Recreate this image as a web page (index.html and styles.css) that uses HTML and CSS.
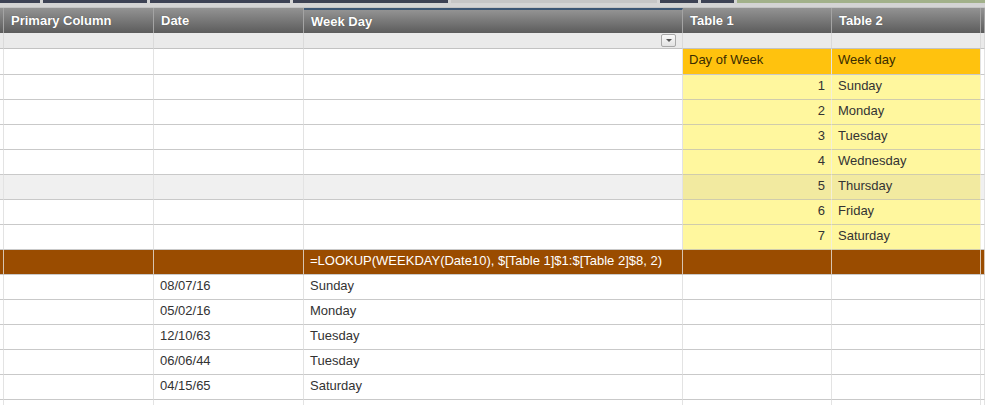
FILE: index.html
```html
<html>
	<head>
		<link rel="stylesheet" href="styles.css">
	</head>
	<body>
		<div class="tabs">
			<div class="tab" style="width: 40px"></div>
			<div class="tab" style="width: 104px"></div>
			<div class="tab" style="width: 140px"></div>
			<div class="tab" style="width: 155px"></div>
			<div class="tab blank" style="width: 206px"></div>
			<div class="tab" style="width: 38px"></div>
			<div class="tab" style="width: 33px"></div>
			<div class="tab green"></div>
		</div>
		<div class="sheet">
			<div class="row head">
				<div class="cell"></div>
				<div class="cell">Primary Column</div>
				<div class="cell">Date</div>
				<div class="cell active">Week Day</div>
				<div class="cell">Table 1</div>
				<div class="cell">Table 2</div>
				<div class="cell"></div>
			</div>
			<div class="row filter">
				<div class="cell"></div>
				<div class="cell"></div>
				<div class="cell"></div>
				<div class="cell drop"><span class="dropbtn"></span></div>
				<div class="cell"></div>
				<div class="cell"></div>
				<div class="cell"></div>
			</div>
			<div class="row first">
				<div class="cell"></div>
				<div class="cell"></div>
				<div class="cell"></div>
				<div class="cell"></div>
				<div class="cell gold">Day of Week</div>
				<div class="cell gold">Week day</div>
				<div class="cell"></div>
			</div>
			<div class="row">
				<div class="cell"></div><div class="cell"></div><div class="cell"></div><div class="cell"></div>
				<div class="cell yellow num">1</div>
				<div class="cell yellow">Sunday</div>
				<div class="cell"></div>
			</div>
			<div class="row">
				<div class="cell"></div><div class="cell"></div><div class="cell"></div><div class="cell"></div>
				<div class="cell yellow num">2</div>
				<div class="cell yellow">Monday</div>
				<div class="cell"></div>
			</div>
			<div class="row">
				<div class="cell"></div><div class="cell"></div><div class="cell"></div><div class="cell"></div>
				<div class="cell yellow num">3</div>
				<div class="cell yellow">Tuesday</div>
				<div class="cell"></div>
			</div>
			<div class="row">
				<div class="cell"></div><div class="cell"></div><div class="cell"></div><div class="cell"></div>
				<div class="cell yellow num">4</div>
				<div class="cell yellow">Wednesday</div>
				<div class="cell"></div>
			</div>
			<div class="row hover">
				<div class="cell"></div><div class="cell"></div><div class="cell"></div><div class="cell"></div>
				<div class="cell yellow num">5</div>
				<div class="cell yellow">Thursday</div>
				<div class="cell"></div>
			</div>
			<div class="row">
				<div class="cell"></div><div class="cell"></div><div class="cell"></div><div class="cell"></div>
				<div class="cell yellow num">6</div>
				<div class="cell yellow">Friday</div>
				<div class="cell"></div>
			</div>
			<div class="row">
				<div class="cell"></div><div class="cell"></div><div class="cell"></div><div class="cell"></div>
				<div class="cell yellow num">7</div>
				<div class="cell yellow">Saturday</div>
				<div class="cell"></div>
			</div>
			<div class="row brown">
				<div class="cell"></div>
				<div class="cell"></div>
				<div class="cell"></div>
				<div class="cell">=LOOKUP(WEEKDAY(Date10), $[Table 1]$1:$[Table 2]$8, 2)</div>
				<div class="cell"></div>
				<div class="cell"></div>
				<div class="cell"></div>
			</div>
			<div class="row">
				<div class="cell"></div><div class="cell"></div>
				<div class="cell">08/07/16</div>
				<div class="cell">Sunday</div>
				<div class="cell"></div><div class="cell"></div><div class="cell"></div>
			</div>
			<div class="row">
				<div class="cell"></div><div class="cell"></div>
				<div class="cell">05/02/16</div>
				<div class="cell">Monday</div>
				<div class="cell"></div><div class="cell"></div><div class="cell"></div>
			</div>
			<div class="row">
				<div class="cell"></div><div class="cell"></div>
				<div class="cell">12/10/63</div>
				<div class="cell">Tuesday</div>
				<div class="cell"></div><div class="cell"></div><div class="cell"></div>
			</div>
			<div class="row">
				<div class="cell"></div><div class="cell"></div>
				<div class="cell">06/06/44</div>
				<div class="cell">Tuesday</div>
				<div class="cell"></div><div class="cell"></div><div class="cell"></div>
			</div>
			<div class="row">
				<div class="cell"></div><div class="cell"></div>
				<div class="cell">04/15/65</div>
				<div class="cell">Saturday</div>
				<div class="cell"></div><div class="cell"></div><div class="cell"></div>
			</div>
			<div class="row">
				<div class="cell"></div><div class="cell"></div><div class="cell"></div><div class="cell"></div>
				<div class="cell"></div><div class="cell"></div><div class="cell"></div>
			</div>
		</div>
	</body>
</html>
```

FILE: styles.css
```css
body{
	margin: 0;
	background: #fff;
	font-family: "Liberation Sans", Arial, sans-serif;
	font-size: 13px;
	color: #333;
	overflow: hidden;
}
.tabs{
	display: flex;
	gap: 3px;
	height: 8px;
	background: #d4d4d4;
	border-bottom: 1px solid #c4c4c4;
	box-sizing: border-box;
}
.tab{
	height: 3px;
	background: #3d4254;
}
.tab.blank{
	background: #c6c6c6;
}
.tab.green{
	flex: 1;
	background: #a2b18a;
}
.row{
	display: grid;
	grid-template-columns: 4px 150px 150px 379px 149px 149px 4px;
	height: 25px;
}
.row.first{
	height: 26px;
}
.cell{
	box-sizing: border-box;
	border-right: 1px solid #e3e3e3;
	border-bottom: 1px solid #c9c9c9;
	padding: 0 6px;
	line-height: 22px;
	white-space: nowrap;
}
.row > .cell:first-child,
.row > .cell:last-child{
	padding: 0;
}
.head .cell{
	background: linear-gradient(#939393, #5c5c5c);
	border-right: 1px solid #a4a4a4;
	border-bottom: none;
	color: #fff;
	font-weight: bold;
	padding-left: 7px;
	line-height: 25px;
	text-shadow: 0 0 1px #444;
}
.head .cell.active{
	border-top: 2px solid #3c5674;
	line-height: 23px;
}
.row.filter{
	height: 16px;
}
.filter .cell{
	background: #eaeaea;
	border-right: 1px solid #dadada;
	border-bottom: 1px solid #c2c2c2;
}
.drop{
	display: flex;
	justify-content: flex-end;
	align-items: center;
}
.dropbtn{
	position: relative;
	width: 13px;
	height: 11px;
	border: 1px solid #a8a8a8;
	border-radius: 2px;
	background: linear-gradient(#fafafa, #e2e2e2);
}
.dropbtn:after{
	content: "";
	position: absolute;
	left: 4px;
	top: 4px;
	border-left: 3px solid transparent;
	border-right: 3px solid transparent;
	border-top: 3px solid #555;
}
.gold{
	background: #ffc20e;
	color: #3a2c00;
}
.yellow{
	background: #fff79e;
	border-right-color: #f4f0d8;
	border-bottom-color: #d0ccac;
}
.num{
	text-align: right;
}
.hover .cell{
	background: #f0f0f0;
}
.hover .cell.yellow{
	background: #f2eaa0;
}
.brown .cell{
	background: #9a4c00;
	color: #fff;
	border-right-color: #d8c4b0;
}
```
